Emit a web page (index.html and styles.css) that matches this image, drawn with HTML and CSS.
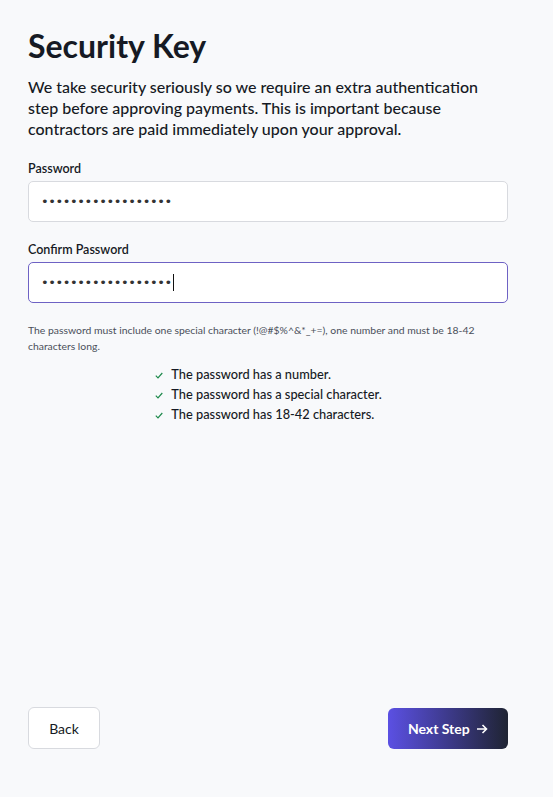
FILE: index.html
```html
<!DOCTYPE html>
<html lang="en">
	<head>
		<meta charset="UTF-8" />
		<title>Security Key</title>
		<link rel="stylesheet" href="styles.css">
	</head>
	<body>
		<div class="page">
			<div class="content">
				<h1>Security Key</h1>
				<p class="intro">We take security seriously so we require an extra authentication step before approving payments. This is important because contractors are paid immediately upon your approval.</p>

				<div class="field">
					<label class="field-label">Password</label>
					<div class="input">
						<span class="dots">&#8226;&#8226;&#8226;&#8226;&#8226;&#8226;&#8226;&#8226;&#8226;&#8226;&#8226;&#8226;&#8226;&#8226;&#8226;&#8226;&#8226;&#8226;</span>
					</div>
				</div>

				<div class="field">
					<label class="field-label">Confirm Password</label>
					<div class="input focused">
						<span class="dots">&#8226;&#8226;&#8226;&#8226;&#8226;&#8226;&#8226;&#8226;&#8226;&#8226;&#8226;&#8226;&#8226;&#8226;&#8226;&#8226;&#8226;&#8226;</span><span class="caret"></span>
					</div>
				</div>

				<p class="hint">The password must include one special character (!@#$%^&amp;*_+=), one number and must be 18-42 characters long.</p>

				<ul class="checks">
					<li><svg class="tick" width="8" height="7" viewBox="0 0 8 7"><path d="M0.8 3.6 L3 5.8 L7.3 1" fill="none" stroke="#1f8a4c" stroke-width="1.2"/></svg>The password has a number.</li>
					<li><svg class="tick" width="8" height="7" viewBox="0 0 8 7"><path d="M0.8 3.6 L3 5.8 L7.3 1" fill="none" stroke="#1f8a4c" stroke-width="1.2"/></svg>The password has a special character.</li>
					<li><svg class="tick" width="8" height="7" viewBox="0 0 8 7"><path d="M0.8 3.6 L3 5.8 L7.3 1" fill="none" stroke="#1f8a4c" stroke-width="1.2"/></svg>The password has 18-42 characters.</li>
				</ul>
			</div>

			<div class="actions">
				<button class="btn btn-back">Back</button>
				<button class="btn btn-next">Next Step <svg class="arrow" width="12" height="10" viewBox="0 0 12 10"><path d="M1 5 H10.5 M6.5 1 L10.5 5 L6.5 9" fill="none" stroke="#fff" stroke-width="1.6"/></svg></button>
			</div>
		</div>
	</body>
</html>
```

FILE: styles.css
```css
html,
body {
	margin: 0;
	height: 100%;
}
body {
	font-family: "Lato", "Noto Sans", sans-serif;
	background: #f8f9fb;
	color: #161a24;
}
.page {
	box-sizing: border-box;
	height: 100%;
	width: 508px;
	padding: 28px 0 48px 28px;
	display: flex;
	flex-direction: column;
}
.content {
	flex: 1;
}
h1 {
	margin: 0;
	font-size: 32px;
	font-weight: 700;
	line-height: 36px;
}
.intro {
	margin: 12px 0 22px;
	font-size: 16px;
	line-height: 21px;
	font-weight: 500;
}
.field {
	margin-bottom: 20px;
}
.field-label {
	display: block;
	font-size: 12.5px;
	font-weight: 600;
	line-height: 16px;
	margin-bottom: 4px;
}
.input {
	box-sizing: border-box;
	height: 41px;
	background: #fff;
	border: 1px solid #d8dadf;
	border-radius: 5px;
	padding: 0 12px;
	display: flex;
	align-items: center;
}
.input.focused {
	border-color: #6e62c4;
}
.dots {
	font-family: "DejaVu Sans", sans-serif;
	font-size: 13px;
	letter-spacing: -0.4px;
	color: #333;
}
.caret {
	display: inline-block;
	width: 1px;
	height: 17px;
	margin-left: 1px;
	background: #111;
}
.hint {
	margin: -1px 0 10px;
	font-size: 10.4px;
	line-height: 16px;
	color: #4a4f5a;
}
.checks {
	list-style: none;
	margin: 0 auto;
	padding: 0;
	width: fit-content;
	white-space: nowrap;
	font-size: 12.8px;
	font-weight: 500;
	line-height: 20px;
}
.tick {
	margin: 0 8px 0 1px;
}
.actions {
	display: flex;
	justify-content: space-between;
	align-items: center;
}
.btn {
	font-family: inherit;
	font-size: 14px;
	border-radius: 6px;
	height: 42px;
	cursor: pointer;
}
.btn-back {
	width: 72px;
	background: #fff;
	border: 1px solid #d8dadf;
	color: #161a24;
}
.btn-next {
	width: 120px;
	height: 41px;
	border: none;
	color: #fff;
	font-weight: 700;
	background: linear-gradient(90deg, #5b50e3, #1f2433);
}
.arrow {
	margin-left: 3px;
}
```
